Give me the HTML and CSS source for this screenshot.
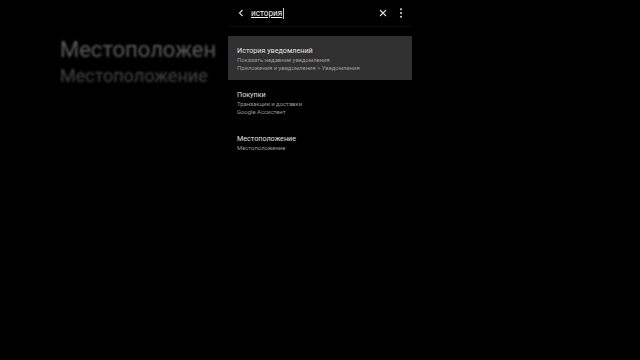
FILE: index.html
```html
<!DOCTYPE html>
<html>
<head>
    <meta charset="UTF-8">
    <title>Settings search</title>
    <link rel="stylesheet" href="styles.css">
</head>
<body>
    <!-- Blurred zoomed copy of the settings screen on the left -->
    <div class="backdrop">
        <div class="backdrop-title">Местоположен</div>
        <div class="backdrop-sub">Местоположение</div>
    </div>

    <!-- Phone screen -->
    <div class="phone">
        <div class="searchbar">
            <svg class="icon" width="8" height="8" viewBox="0 0 8 8">
                <path d="M5.5 1 L2.5 4 L5.5 7" stroke="#ddd" stroke-width="1.1" fill="none"/>
            </svg>
            <span class="query">история</span><span class="caret"></span>
            <span class="spacer"></span>
            <svg class="icon" width="8" height="8" viewBox="0 0 8 8">
                <path d="M1 1 L7 7 M7 1 L1 7" stroke="#ddd" stroke-width="1.1"/>
            </svg>
            <svg class="icon menu" width="4" height="10" viewBox="0 0 4 10">
                <circle cx="2" cy="1.3" r="1" fill="#ddd"/>
                <circle cx="2" cy="5" r="1" fill="#ddd"/>
                <circle cx="2" cy="8.7" r="1" fill="#ddd"/>
            </svg>
        </div>

        <div class="results">
            <div class="result active">
                <div class="result-title">История уведомлений</div>
                <div class="result-sub">Показать недавние уведомления</div>
                <div class="result-sub">Приложения и уведомления &gt; Уведомления</div>
            </div>
            <div class="result">
                <div class="result-title">Покупки</div>
                <div class="result-sub">Транзакции и доставки</div>
                <div class="result-sub">Google Ассистент</div>
            </div>
            <div class="result">
                <div class="result-title">Местоположение</div>
                <div class="result-sub">Местоположение</div>
            </div>
        </div>
    </div>
</body>
</html>
```

FILE: styles.css
```css
body {
    margin: 0;
    width: 640px;
    height: 360px;
    background: #000;
    font-family: Roboto, "Noto Sans", sans-serif;
    display: flex;
    overflow: hidden;
}
/* Left blurred area */
.backdrop {
    width: 168px;
    padding: 37px 0 0 60px;
    filter: blur(0.8px);
}

.backdrop-title {
    font-size: 22px;
    line-height: 26px;
    color: #5c5c5c;
    white-space: nowrap;
}

.backdrop-sub {
    font-size: 18px;
    line-height: 22px;
    margin-top: 2px;
    color: #444;
    white-space: nowrap;
}
/* Phone column */
.phone {
    width: 184px;
    background: #000;
}

.searchbar {
    height: 26px;
    display: flex;
    align-items: center;
    padding: 0 9px 0 9px;
    border-bottom: 1px solid #0c0c0c;
}

.searchbar .icon {
    flex: none;
}

.query {
    margin-left: 6px;
    font-size: 8.2px;
    color: #f2f2f2;
    text-decoration: underline;
    text-underline-offset: 1px;
}

.caret {
    width: 1px;
    height: 11px;
    background: #ccc;
    margin-left: 1px;
}

.spacer {
    flex: 1;
}

.menu {
    margin-left: 12px;
}

.results {
    margin-top: 9px;
}

.result {
    height: 44px;
    padding: 10px 9px 0;
    box-sizing: border-box;
}

.result.active {
    background: #303030;
}

.result-title {
    font-size: 7.2px;
    line-height: 10px;
    color: #e0e0e0;
}

.result-sub {
    font-size: 5.9px;
    line-height: 8px;
    color: #9a9a9a;
}
```
